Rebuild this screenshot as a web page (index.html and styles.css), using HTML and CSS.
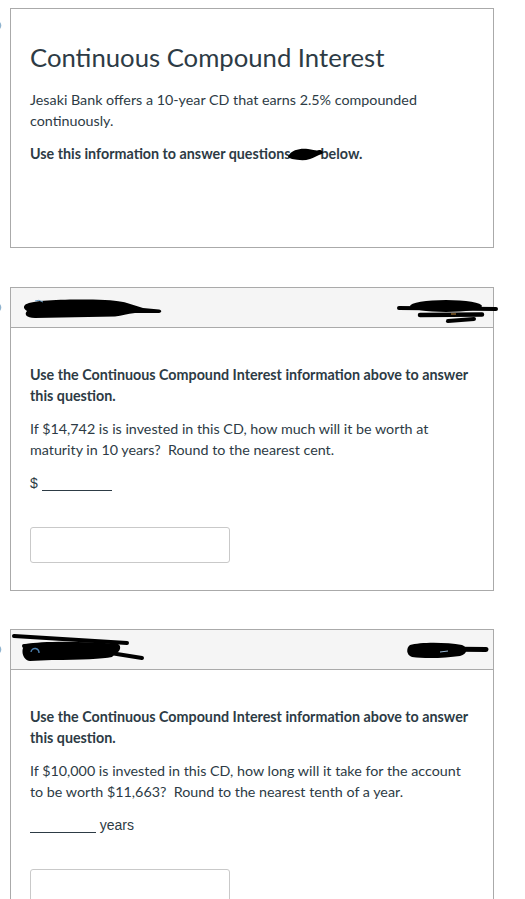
FILE: index.html
```html
<!DOCTYPE html>
<html lang="en">
<head>
<meta charset="utf-8">
<title>Continuous Compound Interest</title>
<link rel="stylesheet" href="styles.css">
</head>
<body>
<div class="page">
  <div class="row row-1">
    <div class="gutter"><svg class="flag" width="4" height="9" viewBox="0 0 4 9"><path d="M0 0.8 Q3.2 4.5 0 8.2" fill="none" stroke="#8fb3cf" stroke-width="1.4"/></svg></div>
    <section class="card intro">
      <h2 class="title">Continuous Compound Interest</h2>
      <p>Jesaki Bank offers a 10-year CD that earns 2.5% compounded continuously.</p>
      <p class="strong">Use this information to answer questions<span class="redact-inline"><svg width="40" height="16" viewBox="0 0 40 16"><path d="M3 9 C6 4 14 2 22 3 C28 4 31 5 33 4 C36 4 38 6 36 8 L33 9 C30 10 28 12 24 13 C18 15 12 14 6 13 C3 12 1 11 3 9 Z" fill="#000"/></svg></span>below.</p>
    </section>
  </div>

  <div class="row row-2">
    <div class="gutter"><svg class="flag" width="4" height="9" viewBox="0 0 4 9"><path d="M0 0.8 Q3.2 4.5 0 8.2" fill="none" stroke="#8fb3cf" stroke-width="1.4"/></svg></div>
    <section class="card question">
      <header class="q-header">
        <svg class="mark mark-l2" width="142" height="24" viewBox="0 0 142 24"><path d="M2 8 C6 3 40 2 70 2.5 C88 3 98 4 104 6 L120 11 L136 12.5 C139 13 139 15.5 136 16 L112 16 C104 17 99 18.5 92 19.5 L12 21 C3 21 1 17 4 14 C1 12 0 10 2 8 Z" fill="#000"/><path d="M12 4 Q16 2 20 5" fill="none" stroke="#6d9cc2" stroke-width="1"/></svg>
        <svg class="mark mark-r2" width="104" height="28" viewBox="0 0 104 28"><path d="M3 11 L100 12" stroke="#000" stroke-width="4" stroke-linecap="round"/><ellipse cx="50" cy="9" rx="36" ry="6" fill="#000"/><path d="M24 18 L86 17.5" stroke="#000" stroke-width="4.5" stroke-linecap="round"/><path d="M52 24 L78 22" stroke="#000" stroke-width="4" stroke-linecap="round"/><path d="M55 17 L60 17" stroke="#c58a3b" stroke-width="1"/></svg>
      </header>
      <div class="q-body">
        <p class="strong">Use the Continuous Compound Interest information above to answer this question.</p>
        <p>If $14,742 is is invested in this CD, how much will it be worth at maturity in 10 years?&nbsp; Round to the nearest cent.</p>
        <p class="blank-line"><span class="arial">$</span> <span class="blank blank-a"></span></p>
        <div class="answer"></div>
      </div>
    </section>
  </div>

  <div class="row row-3">
    <div class="gutter"><svg class="flag" width="4" height="9" viewBox="0 0 4 9"><path d="M0 0.8 Q3.2 4.5 0 8.2" fill="none" stroke="#8fb3cf" stroke-width="1.4"/></svg></div>
    <section class="card question">
      <header class="q-header">
        <svg class="mark mark-l3" width="136" height="30" viewBox="0 0 136 30"><path d="M2 3 L115 10" stroke="#000" stroke-width="4" stroke-linecap="round"/><path d="M14 11 C30 8 70 8 106 11 C110 13 108 19 104 20 L100 24 C90 26 70 27 40 27 L18 28 C10 27 8 15 14 11 Z" fill="#000"/><path d="M12 13 L40 12" stroke="#000" stroke-width="4" stroke-linecap="round"/><path d="M86 18 L130 25" stroke="#000" stroke-width="4" stroke-linecap="round"/><path d="M19 19 A4 4 0 1 1 27 20" fill="none" stroke="#4b7fae" stroke-width="1.4"/></svg>
        <svg class="mark mark-r3" width="84" height="22" viewBox="0 0 84 22"><path d="M4 6 C14 3 40 3 56 6 C62 8 62 15 54 17 C40 19 20 20 6 18 C0 16 0 9 4 6 Z" fill="#000"/><path d="M30 10 L80 10.5" stroke="#000" stroke-width="5" stroke-linecap="round"/><path d="M34 13 L42 12" stroke="#9ab9d6" stroke-width="1"/></svg>
      </header>
      <div class="q-body">
        <p class="strong">Use the Continuous Compound Interest information above to answer this question.</p>
        <p>If $10,000 is invested in this CD, how long will it take for the account to be worth $11,663?&nbsp; Round to the nearest tenth of a year.</p>
        <p class="blank-line"><span class="blank blank-b"></span> <span class="arial">years</span></p>
        <div class="answer"></div>
      </div>
    </section>
  </div>
</div>
</body>
</html>
```

FILE: styles.css
```css
html, body {
  margin: 0;
  padding: 0;
  background: #ffffff;
}

body {
  font-family: Lato, "Open Sans", sans-serif;
  color: #2d3b45;
  font-size: 14.3px;
  line-height: 21px;
}

.page {
  padding: 8px 31px 0 0;
}

.row {
  display: flex;
  align-items: flex-start;
}

.row-1 { margin-bottom: 39px; }
.row-2 { margin-bottom: 38px; }

.gutter {
  width: 10px;
  flex: 0 0 10px;
  position: relative;
}

.flag {
  display: block;
  margin-left: -1px;
}

.row-1 .flag { margin-top: 13px; }
.row-2 .flag { margin-top: 16px; }
.row-3 .flag { margin-top: 16px; }

.card {
  width: 484px;
  box-sizing: border-box;
  border: 1px solid #aaaaaa;
  background: #ffffff;
}

.intro {
  height: 240px;
  padding: 33px 20px 0 19px;
}

.title {
  margin: 0 0 16px;
  font-size: 25.7px;
  line-height: 31.2px;
  font-weight: 400;
  color: #2d3b45;
}

p {
  margin: 0 0 12px;
}

.strong {
  font-weight: 700;
}

.redact-inline {
  display: inline-block;
  width: 30px;
  height: 16px;
  vertical-align: -3px;
  position: relative;
}

.redact-inline svg {
  position: absolute;
  left: -5px;
  top: 0;
}

.q-header {
  height: 39px;
  background: #f5f5f5;
  border-bottom: 1px solid #aaaaaa;
  display: flex;
  justify-content: space-between;
  align-items: flex-start;
  overflow: visible;
}

.mark {
  display: block;
  flex: 0 0 auto;
  overflow: visible;
}

.mark-l2 { margin: 9px 0 0 12px; }
.mark-r2 { margin: 9px -7px 0 0; }
.mark-l3 { margin: 3px 0 0 1px; }
.mark-r3 { margin: 9px 3px 0 0; }

.q-body {
  padding: 36px 20px 27px 19px;
}

.blank-line {
  margin-bottom: 12px;
}

.arial {
  font-family: "Liberation Sans", Arial, sans-serif;
  font-size: 14px;
}

.blank {
  display: inline-block;
  border-bottom: 1px solid #2d3b45;
  height: 1px;
  vertical-align: -3px;
}

.blank-a { width: 70px; margin-left: 1px; }
.blank-b { width: 66px; margin-right: 0; }

.answer {
  margin-top: 33px;
  width: 200px;
  height: 36px;
  box-sizing: border-box;
  border: 1px solid #c9c9c9;
  border-radius: 3px;
  background: #ffffff;
}
```
